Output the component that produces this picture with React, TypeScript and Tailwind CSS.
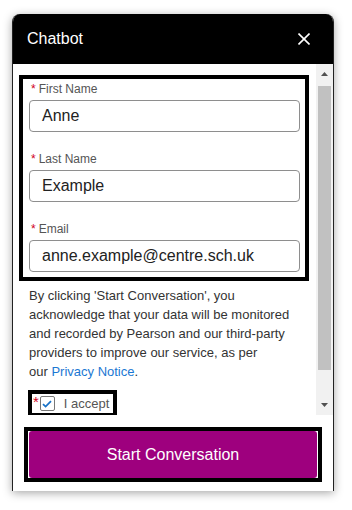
import React from "react";

function Field({ label, value }: { label: string; value: string }) {
  return (
    <div className="flex flex-col">
      <div className="flex items-start pl-[2px] h-[14px] mb-[4px] text-[12px] leading-[14px] text-[#555]">
        <span className="text-[#d0021b] mr-[3px]">*</span>
        <span>{label}</span>
      </div>
      <div className="h-[32px] rounded-[4px] border border-[#8e8e8e] bg-white flex items-center pl-[12px] text-[16px] text-[#222]">
        {value}
      </div>
    </div>
  );
}

export default function App() {
  return (
    <div className="w-[352px] h-[510px] bg-white pt-[14px] pl-[12px] font-['Liberation_Sans',Arial,sans-serif]">
      <div className="w-[322px] h-[477px] flex flex-col bg-white rounded-t-[8px] overflow-hidden border-x border-[#222] shadow-[0_2px_10px_rgba(0,0,0,0.35)]">
        {/* Header */}
        <div className="h-[50px] shrink-0 bg-black flex items-center justify-between pl-[14px] pr-[23px]">
          <span className="text-white text-[16px] leading-none">Chatbot</span>
          <svg width="12" height="12" viewBox="0 0 12 12">
            <line x1="0.5" y1="0.5" x2="11.5" y2="11.5" stroke="white" strokeWidth="1.6" />
            <line x1="11.5" y1="0.5" x2="0.5" y2="11.5" stroke="white" strokeWidth="1.6" />
          </svg>
        </div>

        {/* Scroll area */}
        <div className="h-[351px] shrink-0 flex">
          <div className="flex-1 overflow-hidden">
            <div className="mt-[11px] ml-[6px] w-[290px] border-4 border-black pt-[3px] pb-[5px] pl-[6px] pr-[5px] flex flex-col gap-[20px]">
              <Field label="First Name" value="Anne" />
              <Field label="Last Name" value="Example" />
              <Field label="Email" value="anne.example@centre.sch.uk" />
            </div>
            <p className="mt-[5px] pl-[16px] w-[300px] text-[13px] leading-[19px] text-[#333]">
              By clicking 'Start Conversation', you
              <br />
              acknowledge that your data will be monitored
              <br />
              and recorded by Pearson and our third-party
              <br />
              providers to improve our service, as per
              <br />
              our <span className="text-[#1b78d3]">Privacy Notice</span>.
            </p>
            <div className="mt-[9px] ml-[15px] w-[89px] h-[27px] border-4 border-black flex items-center">
              <span className="self-start ml-[1px] text-[15px] leading-[15px] text-[#d0021b]">*</span>
              <div className="ml-[1px] w-[15px] h-[15px] border border-[#777] rounded-[2px] bg-white flex items-center justify-center">
                <svg width="10" height="8" viewBox="0 0 10 8">
                  <polyline points="1,4.2 3.6,6.6 9,1.2" fill="none" stroke="#1a73c8" strokeWidth="1.8" />
                </svg>
              </div>
              <span className="ml-[9px] text-[13px] leading-none text-[#555]">I accept</span>
            </div>
          </div>
          {/* Scrollbar */}
          <div className="w-[17px] bg-[#f1f1f1] flex flex-col items-center">
            <svg className="mt-[8px]" width="7" height="4" viewBox="0 0 7 4">
              <polygon points="0,4 3.5,0 7,4" fill="#505050" />
            </svg>
            <div className="mt-[10px] w-[13px] h-[284px] bg-[#c1c1c1]" />
            <div className="flex-1" />
            <svg className="mb-[8px]" width="7" height="4" viewBox="0 0 7 4">
              <polygon points="0,0 7,0 3.5,4" fill="#505050" />
            </svg>
          </div>
        </div>

        {/* Footer */}
        <div className="flex-1 pt-[12px] pl-[11px]">
          <div className="w-[298px] h-[55px] border-4 border-black px-[1px]">
            <button className="w-full h-full rounded-[3px] bg-[#9e007e] text-white text-[16px] flex items-center justify-center">
              Start Conversation
            </button>
          </div>
        </div>
      </div>
    </div>
  );
}
